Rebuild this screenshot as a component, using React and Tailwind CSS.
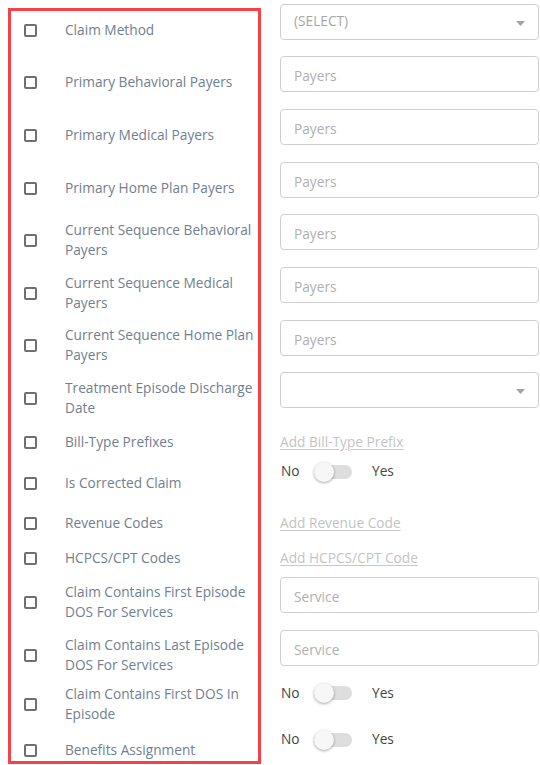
import React from "react";

const rows = [
  { label: "Claim Method", mt: "mt-[9px]" },
  { label: "Primary Behavioral Payers", mt: "mt-[32px]" },
  { label: "Primary Medical Payers", mt: "mt-[33px]" },
  { label: "Primary Home Plan Payers", mt: "mt-[33px]" },
  { label: "Current Sequence Behavioral Payers", mt: "mt-[22px]" },
  { label: "Current Sequence Medical Payers", mt: "mt-[13px]" },
  { label: "Current Sequence Home Plan Payers", mt: "mt-[12px]" },
  { label: "Treatment Episode Discharge Date", mt: "mt-[13px]" },
  { label: "Bill-Type Prefixes", mt: "mt-[14px]" },
  { label: "Is Corrected Claim", mt: "mt-[21px]" },
  { label: "Revenue Codes", mt: "mt-[20px]" },
  { label: "HCPCS/CPT Codes", mt: "mt-[15px]" },
  { label: "Claim Contains First Episode DOS For Services", mt: "mt-[14px]" },
  { label: "Claim Contains Last Episode DOS For Services", mt: "mt-[13px]" },
  { label: "Claim Contains First DOS In Episode", mt: "mt-[9px]" },
  { label: "Benefits Assignment", mt: "mt-[16px]" },
];

const Caret = () => (
  <svg width="9" height="5" viewBox="0 0 9 5" className="absolute right-[13px] top-[16px]">
    <path d="M0 0 L9 0 L4.5 5 Z" fill="#a3a3a3" />
  </svg>
);

const SelectBox = ({ text, className }) => (
  <div
    className={`relative h-[36px] w-full rounded-[4px] border border-[#cfcfcf] bg-white flex items-center pl-[13px] text-[13.7px] text-[#a6a6a6] ${className}`}
  >
    {text}
    <Caret />
  </div>
);

const TextBox = ({ placeholder, className }) => (
  <input
    readOnly
    placeholder={placeholder}
    className={`h-[36px] w-full rounded-[4px] border border-[#cfcfcf] bg-white pl-[13px] pt-[3px] text-[13.7px] outline-none placeholder:text-[#b0b0b0] ${className}`}
  />
);

const AddLink = ({ text, className }) => (
  <div className={`h-[20px] leading-[20px] text-[13.7px] ${className}`}>
    <a className="text-[#c4c4c4] underline underline-offset-2 decoration-[#c8c8c8] cursor-pointer">
      {text}
    </a>
  </div>
);

const Toggle = ({ className }) => (
  <div className={`flex items-center h-[20px] text-[13.7px] text-[#444] ${className}`}>
    <span className="w-[34px] pl-[1px]">No</span>
    <div className="relative w-[38px] h-[20px] flex items-center">
      <div className="w-[38px] h-[14px] rounded-full bg-[#dedede]" />
      <div className="absolute left-0 top-0 w-[20px] h-[20px] rounded-full bg-[#f7f7f7] shadow-[0_1px_3px_rgba(0,0,0,0.35)]" />
    </div>
    <span className="ml-[20px]">Yes</span>
  </div>
);

export default function App() {
  return (
    <div
      className="w-[540px] h-[765px] bg-white flex overflow-hidden"
      style={{ fontFamily: '"Open Sans", "Noto Sans", sans-serif' }}
    >
      {/* left labels */}
      <div className="ml-[8px] mt-[8px] w-[253px] h-[756px] border-[3px] border-[#f44248] flex flex-col">
        {rows.map((r) => (
          <div key={r.label} className={`flex items-center ${r.mt}`}>
            <div className="ml-[13px] w-[13px] h-[13px] shrink-0 rounded-[2px] border-2 border-[#6f6f6f] bg-white" />
            <div className="ml-[28px] w-[193px] text-[13.7px] leading-[20px] text-[#718090]">
              {r.label}
            </div>
          </div>
        ))}
      </div>

      {/* right inputs */}
      <div className="ml-[19px] w-[259px] pt-[3.5px] flex flex-col">
        <SelectBox text="(SELECT)" />
        <TextBox placeholder="Payers" className="mt-[16.7px]" />
        <TextBox placeholder="Payers" className="mt-[16.7px]" />
        <TextBox placeholder="Payers" className="mt-[16.7px]" />
        <TextBox placeholder="Payers" className="mt-[16.7px]" />
        <TextBox placeholder="Payers" className="mt-[16.7px]" />
        <TextBox placeholder="Payers" className="mt-[16.7px]" />
        <SelectBox text="" className="mt-[16.7px]" />
        <AddLink text="Add Bill-Type Prefix" className="mt-[23.3px]" />
        <Toggle className="mt-[10px]" />
        <AddLink text="Add Revenue Code" className="mt-[31px]" />
        <AddLink text="Add HCPCS/CPT Code" className="mt-[15px]" />
        <TextBox placeholder="Service" className="mt-[9.5px]" />
        <TextBox placeholder="Service" className="mt-[16.7px]" />
        <Toggle className="mt-[17.3px]" />
        <Toggle className="mt-[26.5px]" />
      </div>
    </div>
  );
}
